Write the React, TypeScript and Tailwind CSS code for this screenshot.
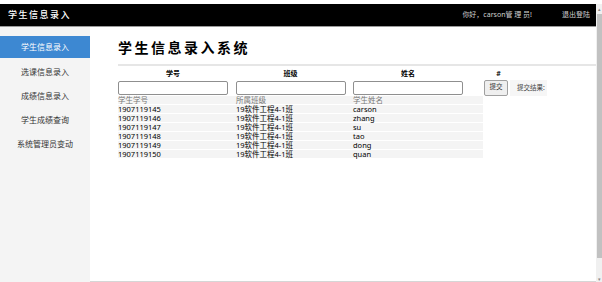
const menu = ['学生信息录入', '选课信息录入', '成绩信息录入', '学生成绩查询', '系统管理员变动'];

const students = [
  { id: '1907119145', cls: '19软件工程4-1班', name: 'carson' },
  { id: '1907119146', cls: '19软件工程4-1班', name: 'zhang' },
  { id: '1907119147', cls: '19软件工程4-1班', name: 'su' },
  { id: '1907119148', cls: '19软件工程4-1班', name: 'tao' },
  { id: '1907119149', cls: '19软件工程4-1班', name: 'dong' },
  { id: '1907119150', cls: '19软件工程4-1班', name: 'quan' },
];

export default function App() {
  return (
    <div
      className="w-[602px] h-[282px] overflow-hidden bg-white flex flex-col"
      style={{ fontFamily: '"Noto Sans", "Noto Sans CJK SC", sans-serif' }}
    >
      <div className="h-[4px] bg-white shrink-0" />
      <div className="flex flex-1 min-h-0">
        <div className="flex-1 flex flex-col min-w-0">
          {/* top bar */}
          <div className="h-[23px] bg-black border-b border-[#9a9a9a] flex items-center text-white shrink-0">
            <div className="pl-[8px] text-[9px] tracking-[1.5px] font-medium">学生信息录入</div>
            <div className="ml-auto text-[7px] text-[#d0d0d0] pr-[30px]">你好，carson管 理 员!</div>
            <div className="text-[7px] text-[#d0d0d0] pr-[6px]">退出登陆</div>
          </div>

          <div className="flex flex-1 min-h-0">
            {/* sidebar */}
            <div className="w-[90px] bg-[#f4f4f4] pt-[9px] shrink-0">
              {menu.map((m, i) =>
                i === 0 ? (
                  <div key={m} className="h-[22px] mb-[2px] bg-[#3d88d2] text-white text-[8px] flex items-center justify-center">
                    {m}
                  </div>
                ) : (
                  <div key={m} className="h-[24px] text-[#333] text-[8px] flex items-center justify-center">
                    {m}
                  </div>
                )
              )}
            </div>

            {/* content */}
            <div className="flex-1 flex flex-col pl-[28px] pt-[12px] border-b border-[#d6d6d6]">
              <h1 className="text-[14px] font-bold tracking-[2.5px] leading-[18px] text-black">学生信息录入系统</h1>
              <div className="h-[2px] bg-[#e6e6e6] mt-[7px]" />

              <div className="mt-[3px] text-[7.5px] text-black">
                <div className="flex h-[10px] items-center font-semibold text-[7px] leading-[10px]">
                  <div className="w-[118px] text-center pr-[8px]">学号</div>
                  <div className="w-[117px] text-center pr-[8px]">班级</div>
                  <div className="w-[130px] text-center pr-[20px]">姓名</div>
                  <div className="w-[27px] text-center pl-[4px]">#</div>
                </div>
                <div className="flex h-[17px] items-center">
                  <div className="w-[118px]">
                    <div className="w-[110px] h-[14px] border border-[#8f8f8f] rounded-[2px] bg-white" />
                  </div>
                  <div className="w-[117px]">
                    <div className="w-[110px] h-[14px] border border-[#8f8f8f] rounded-[2px] bg-white" />
                  </div>
                  <div className="w-[130px]">
                    <div className="w-[110px] h-[14px] border border-[#8f8f8f] rounded-[2px] bg-white" />
                  </div>
                  <div className="w-[27px] flex">
                    <button className="ml-[1px] w-[24px] h-[16px] bg-[#efefef] border border-[#a0a0a0] rounded-[2px] text-[6.5px] text-[#333] leading-none">
                      提交
                    </button>
                  </div>
                  <div className="h-[16px] flex items-center pl-[7px] pr-[2px] bg-[#f6f6f6] text-[6.5px] text-[#444]">提交结果:</div>
                </div>
                <div className="w-[365px]">
                  <div className="flex h-[9px] items-center bg-[#f4f4f4] border-b border-white text-[#777] leading-[8px]">
                    <div className="w-[118px]">学生学号</div>
                    <div className="w-[117px]">所属班级</div>
                    <div className="w-[130px]">学生姓名</div>
                  </div>
                  {students.map((s) => (
                    <div key={s.id} className="flex h-[9px] items-center bg-[#f4f4f4] border-b border-white leading-[8px]">
                      <div className="w-[118px]">{s.id}</div>
                      <div className="w-[117px]">{s.cls}</div>
                      <div className="w-[130px]">{s.name}</div>
                    </div>
                  ))}
                </div>
              </div>
            </div>
          </div>
        </div>

        {/* scrollbar */}
        <div className="w-[6px] bg-[#f0f0f0] flex flex-col items-center shrink-0">
          <div className="h-[10px] text-[5px] leading-[10px] text-[#888]">▴</div>
          <div className="w-[5px] flex-1 bg-[#c1c1c1] mb-[18px]" />
          <div className="h-[6px] text-[5px] leading-[6px] text-[#888]">▾</div>
        </div>
      </div>
    </div>
  );
}
